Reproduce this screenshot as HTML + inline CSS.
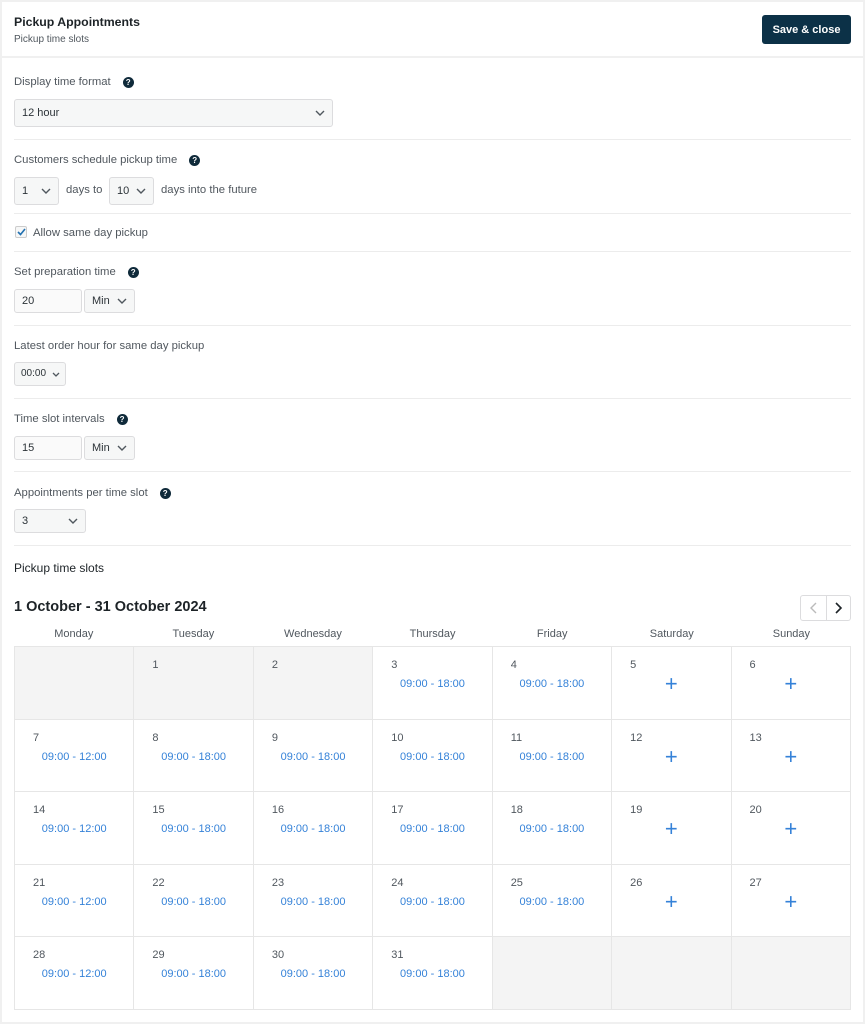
<!DOCTYPE html>
<html><head><meta charset="utf-8"><style>
*{box-sizing:border-box;margin:0;padding:0}
body{width:865px;height:1024px;background:#f0f0f0;font-family:"Liberation Sans",sans-serif;color:#50575e;font-size:11px;position:relative;overflow:hidden}
.card{position:absolute;left:2px;top:2px;width:861px;height:1020px;background:#fff}
.a{position:absolute}
.hr{position:absolute;left:14px;width:837px;height:1px;background:#ececec}
.sel{position:absolute;border:1px solid #dcdcde;border-radius:3px;background:#f6f7f7;height:28px;font-size:11px;color:#2c3338;padding:7px 0 0 7px}
.sel svg{position:absolute;right:7px;top:10px}
.q{display:inline-block;width:11px;height:11px;border-radius:50%;background:#0f2a3a;color:#fff;font-size:8px;font-weight:bold;text-align:center;line-height:11px;margin-left:12px;vertical-align:0}
.lab{position:absolute;left:14px;font-size:11.3px;color:#50575e}
table{position:absolute;left:14px;top:646px;width:837px;border-collapse:collapse;table-layout:fixed}
td{border:1px solid #e6e6e6;height:72.6px;vertical-align:top;text-align:center;position:relative}
td.g{background:#f4f4f4}
td .n{position:absolute;left:18px;top:12px;color:#50575e;font-size:11px}
td .t{position:absolute;left:0;right:0;top:31px;color:#3582d8;font-size:11px}
td .p{position:absolute;left:0;right:0;top:24px;color:#3582d8;font-size:22px;font-weight:300}
.dn{position:absolute;top:628px;width:119.6px;text-align:center;font-size:11px;color:#50575e}
</style></head><body><div class="card"></div>
<div class="a" style="left:14px;top:15px;font-size:12.3px;font-weight:bold;color:#1d2327">Pickup Appointments</div>
<div class="a" style="left:14px;top:34px;font-size:10px;color:#50575e">Pickup time slots</div>
<div class="a" style="left:762px;top:15px;width:89px;height:29px;background:#0c3147;border-radius:3px;color:#fff;font-weight:bold;font-size:11px;text-align:center;line-height:30px">Save &amp; close</div>
<div class="a" style="left:2px;top:56px;width:861px;height:2px;background:#f0f0f0"></div>

<div class="lab" style="top:76px">Display time format<span class="q">?</span></div>
<div class="sel" style="left:14px;top:99px;width:319px">12 hour<svg width="10" height="6"><path d="M1 1l4 4 4-4" stroke="#50575e" stroke-width="1.4" fill="none"/></svg></div>
<div class="hr" style="top:139px"></div>

<div class="lab" style="top:154px">Customers schedule pickup time<span class="q">?</span></div>
<div class="sel" style="left:14px;top:177px;width:45px">1<svg width="10" height="6"><path d="M1 1l4 4 4-4" stroke="#50575e" stroke-width="1.4" fill="none"/></svg></div>
<div class="lab" style="left:66px;top:184px">days to</div>
<div class="sel" style="left:109px;top:177px;width:45px">10<svg width="10" height="6"><path d="M1 1l4 4 4-4" stroke="#50575e" stroke-width="1.4" fill="none"/></svg></div>
<div class="lab" style="left:161px;top:184px">days into the future</div>
<div class="hr" style="top:213px"></div>

<div class="a" style="left:15px;top:226px;width:12px;height:12px;border:1px solid #ccc;border-radius:2px;background:#f6f7f7"><svg width="10" height="10" style="position:absolute;left:0;top:0"><path d="M2 5l2.5 2.5L9 2" stroke="#2271b1" stroke-width="1.6" fill="none"/></svg></div>
<div class="lab" style="left:33px;top:227px">Allow same day pickup</div>
<div class="hr" style="top:251px"></div>

<div class="lab" style="top:266px">Set preparation time<span class="q">?</span></div>
<div class="sel" style="left:14px;top:289px;width:68px;height:24px;background:#fafafa;padding-top:5px">20</div>
<div class="sel" style="left:84px;top:289px;width:51px;height:24px;padding-top:5px">Min<svg width="10" height="6" style="top:8px"><path d="M1 1l4 4 4-4" stroke="#50575e" stroke-width="1.4" fill="none"/></svg></div>
<div class="hr" style="top:325px"></div>

<div class="lab" style="top:340px">Latest order hour for same day pickup</div>
<div class="sel" style="left:14px;top:362px;width:52px;height:24px;padding:5px 0 0 6px;font-size:10px">00:00<svg width="8" height="5" style="top:9px;right:5px"><path d="M1 1l3 3 3-3" stroke="#50575e" stroke-width="1.3" fill="none"/></svg></div>
<div class="hr" style="top:398px"></div>

<div class="lab" style="top:413px">Time slot intervals<span class="q">?</span></div>
<div class="sel" style="left:14px;top:436px;width:68px;height:24px;background:#fafafa;padding-top:5px">15</div>
<div class="sel" style="left:84px;top:436px;width:51px;height:24px;padding-top:5px">Min<svg width="10" height="6" style="top:8px"><path d="M1 1l4 4 4-4" stroke="#50575e" stroke-width="1.4" fill="none"/></svg></div>
<div class="hr" style="top:471px"></div>

<div class="lab" style="top:487px">Appointments per time slot<span class="q">?</span></div>
<div class="sel" style="left:14px;top:509px;width:72px;height:24px;padding-top:5px">3<svg width="10" height="6" style="top:8px"><path d="M1 1l4 4 4-4" stroke="#50575e" stroke-width="1.4" fill="none"/></svg></div>
<div class="hr" style="top:545px"></div>

<div class="a" style="left:14px;top:561px;font-size:12px;color:#1d2327">Pickup time slots</div>
<div class="a" style="left:14px;top:599px;font-size:14.5px;font-weight:bold;color:#1d2327">1 October - 31 October 2024</div>
<div class="a" style="left:800px;top:595px;width:51px;height:26px;border:1px solid #dcdcde;border-radius:3px;background:#fff"><div class="a" style="left:25px;top:0;width:1px;height:24px;background:#dcdcde"></div><svg class="a" style="left:8px;top:6px" width="10" height="12"><path d="M7 1L2 6l5 5" stroke="#bbb" stroke-width="1.4" fill="none"/></svg><svg class="a" style="left:32px;top:6px" width="10" height="12"><path d="M3 1l5 5-5 5" stroke="#1d2327" stroke-width="1.6" fill="none"/></svg></div>

<div class="dn" style="left:14px">Monday</div><div class="dn" style="left:133.6px">Tuesday</div><div class="dn" style="left:253.2px">Wednesday</div><div class="dn" style="left:372.8px">Thursday</div><div class="dn" style="left:492.4px">Friday</div><div class="dn" style="left:612px">Saturday</div><div class="dn" style="left:731.6px">Sunday</div>

<table>
<tr><td class="g"></td><td class="g"><span class="n">1</span></td><td class="g"><span class="n">2</span></td><td><span class="n">3</span><span class="t">09:00 - 18:00</span></td><td><span class="n">4</span><span class="t">09:00 - 18:00</span></td><td><span class="n">5</span><span class="p">+</span></td><td><span class="n">6</span><span class="p">+</span></td></tr>
<tr><td><span class="n">7</span><span class="t">09:00 - 12:00</span></td><td><span class="n">8</span><span class="t">09:00 - 18:00</span></td><td><span class="n">9</span><span class="t">09:00 - 18:00</span></td><td><span class="n">10</span><span class="t">09:00 - 18:00</span></td><td><span class="n">11</span><span class="t">09:00 - 18:00</span></td><td><span class="n">12</span><span class="p">+</span></td><td><span class="n">13</span><span class="p">+</span></td></tr>
<tr><td><span class="n">14</span><span class="t">09:00 - 12:00</span></td><td><span class="n">15</span><span class="t">09:00 - 18:00</span></td><td><span class="n">16</span><span class="t">09:00 - 18:00</span></td><td><span class="n">17</span><span class="t">09:00 - 18:00</span></td><td><span class="n">18</span><span class="t">09:00 - 18:00</span></td><td><span class="n">19</span><span class="p">+</span></td><td><span class="n">20</span><span class="p">+</span></td></tr>
<tr><td><span class="n">21</span><span class="t">09:00 - 12:00</span></td><td><span class="n">22</span><span class="t">09:00 - 18:00</span></td><td><span class="n">23</span><span class="t">09:00 - 18:00</span></td><td><span class="n">24</span><span class="t">09:00 - 18:00</span></td><td><span class="n">25</span><span class="t">09:00 - 18:00</span></td><td><span class="n">26</span><span class="p">+</span></td><td><span class="n">27</span><span class="p">+</span></td></tr>
<tr><td><span class="n">28</span><span class="t">09:00 - 12:00</span></td><td><span class="n">29</span><span class="t">09:00 - 18:00</span></td><td><span class="n">30</span><span class="t">09:00 - 18:00</span></td><td><span class="n">31</span><span class="t">09:00 - 18:00</span></td><td class="g"></td><td class="g"></td><td class="g"></td></tr>
</table>
</body></html>
